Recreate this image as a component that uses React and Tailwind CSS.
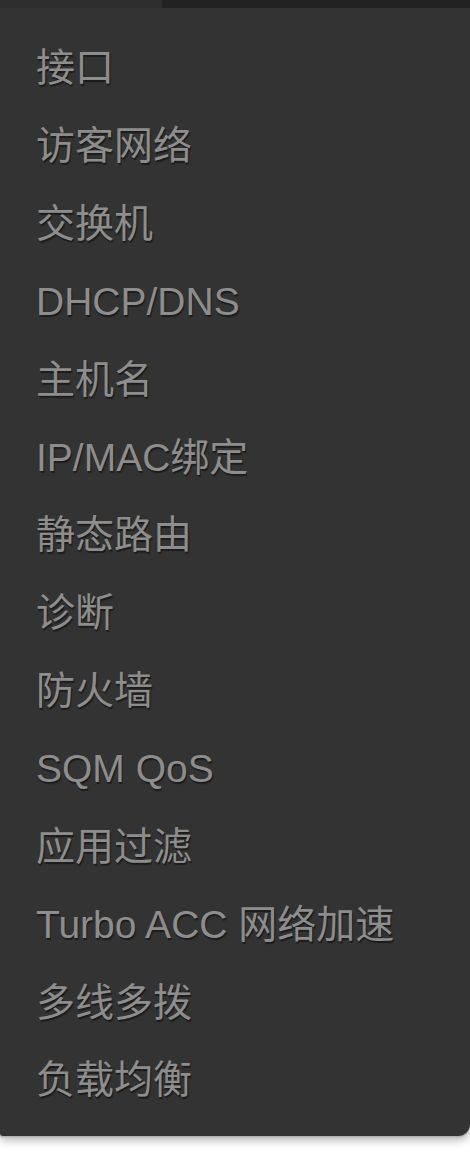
const items = [
  '接口',
  '访客网络',
  '交换机',
  'DHCP/DNS',
  '主机名',
  'IP/MAC绑定',
  '静态路由',
  '诊断',
  '防火墙',
  'SQM QoS',
  '应用过滤',
  'Turbo ACC 网络加速',
  '多线多拨',
  '负载均衡',
]

export default function App() {
  return (
    <div className="min-h-[1154px] bg-white" style={{ fontFamily: '"Liberation Sans", "Noto Sans CJK SC", sans-serif' }}>
      {/* top bar remnant */}
      <div className="flex h-[8px]">
        <div className="w-[162px] bg-[#2e2e2e]" />
        <div className="flex-1 bg-[#222222]" />
      </div>

      {/* dropdown menu */}
      <ul className="bg-[#333333] pt-[21px] pb-[17px] rounded-bl-[3px] rounded-br-[12px] shadow-[0_1px_0_#b0b0b0,0_2px_0_#c4c4c4,0_4px_10px_rgba(0,0,0,0.3)]">
        {items.map(label => (
          <li key={label} className="h-[77.85px] flex items-center pl-[36px] text-[39px] leading-none text-[#8d8d8d] [text-shadow:1px_2px_1px_#1c1c1c] whitespace-nowrap">
            {label}
          </li>
        ))}
      </ul>
    </div>
  )
}
